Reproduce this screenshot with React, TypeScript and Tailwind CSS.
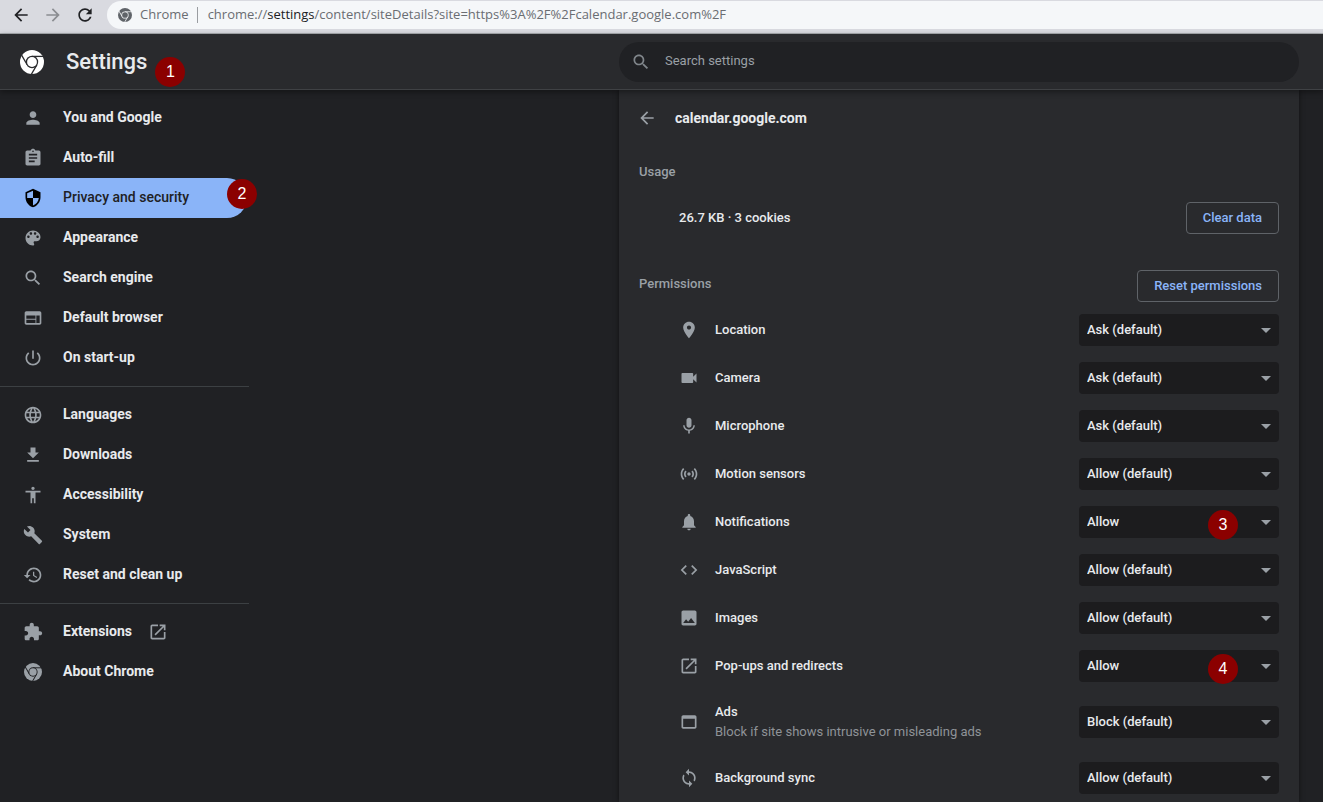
import { useId, type ReactNode } from "react";

const PATHS = {
  person: "M12 12c2.21 0 4-1.79 4-4s-1.79-4-4-4-4 1.79-4 4 1.79 4 4 4zm0 2c-2.67 0-8 1.34-8 4v2h16v-2c0-2.66-5.33-4-8-4z",
  assignment:
    "M19 3h-4.18C14.4 1.84 13.3 1 12 1c-1.3 0-2.4.84-2.82 2H5c-1.1 0-2 .9-2 2v14c0 1.1.9 2 2 2h14c1.1 0 2-.9 2-2V5c0-1.1-.9-2-2-2zm-7 0c.55 0 1 .45 1 1s-.45 1-1 1-1-.45-1-1 .45-1 1-1zm2 14H7v-2h7v2zm3-4H7v-2h10v2zm0-4H7V7h10v2z",
  shield:
    "M12 1L3 5v6c0 5.55 3.84 10.74 9 12 5.16-1.26 9-6.45 9-12V5l-9-4zm0 10.99h7c-.53 4.12-3.28 7.79-7 8.94V12H5V6.3l7-3.11v8.8z",
  palette:
    "M12 3c-4.97 0-9 4.03-9 9s4.03 9 9 9c.83 0 1.5-.67 1.5-1.5 0-.39-.15-.74-.39-1.01-.23-.26-.38-.61-.38-.99 0-.83.67-1.5 1.5-1.5H16c2.76 0 5-2.24 5-5 0-4.42-4.03-8-9-8zm-5.5 9c-.83 0-1.5-.67-1.5-1.5S5.67 9 6.5 9 8 9.67 8 10.5 7.33 12 6.5 12zm3-4C8.67 8 8 7.33 8 6.5S8.67 5 9.5 5s1.5.67 1.5 1.5S10.33 8 9.5 8zm5 0c-.83 0-1.5-.67-1.5-1.5S13.67 5 14.5 5s1.5.67 1.5 1.5S15.33 8 14.5 8zm3 4c-.83 0-1.5-.67-1.5-1.5S16.67 9 17.5 9s1.5.67 1.5 1.5-.67 1.5-1.5 1.5z",
  search:
    "M15.5 14h-.79l-.28-.27C15.41 12.59 16 11.11 16 9.5 16 5.91 13.09 3 9.5 3S3 5.91 3 9.5 5.91 16 9.5 16c1.61 0 3.09-.59 4.23-1.57l.27.28v.79l5 4.99L20.49 19l-4.99-5zm-6 0C7.01 14 5 11.99 5 9.5S7.01 5 9.5 5 14 7.01 14 9.5 11.99 14 9.5 14z",
  web: "M20 4H4c-1.1 0-1.99.9-1.99 2L2 18c0 1.1.9 2 2 2h16c1.1 0 2-.9 2-2V6c0-1.1-.9-2-2-2zm-5 14H4v-4h11v4zm0-5H4V9h11v4zm5 5h-4V9h4v9z",
  power:
    "M13 3h-2v10h2V3zm4.83 2.17l-1.42 1.42C17.99 7.86 19 9.81 19 12c0 3.87-3.13 7-7 7s-7-3.13-7-7c0-2.19 1.01-4.14 2.58-5.42L6.17 5.17C4.23 6.82 3 9.26 3 12c0 4.97 4.03 9 9 9s9-4.03 9-9c0-2.74-1.23-5.18-3.17-6.83z",
  globe:
    "M11.99 2C6.47 2 2 6.48 2 12s4.47 10 9.99 10C17.52 22 22 17.52 22 12S17.52 2 11.99 2zm6.93 6h-2.95c-.32-1.25-.78-2.45-1.38-3.56 1.84.63 3.37 1.91 4.33 3.56zM12 4.04c.83 1.2 1.48 2.53 1.91 3.96h-3.82c.43-1.43 1.08-2.76 1.91-3.96zM4.26 14C4.1 13.36 4 12.69 4 12s.1-1.36.26-2h3.38c-.08.66-.14 1.32-.14 2 0 .68.06 1.34.14 2H4.26zm.82 2h2.95c.32 1.25.78 2.45 1.38 3.56-1.84-.63-3.37-1.9-4.33-3.56zm2.95-8H5.08c.96-1.66 2.49-2.93 4.33-3.56C8.81 5.55 8.35 6.75 8.03 8zM12 19.96c-.83-1.2-1.48-2.53-1.91-3.96h3.82c-.43 1.43-1.08 2.76-1.91 3.96zM14.34 14H9.66c-.09-.66-.16-1.32-.16-2 0-.68.07-1.35.16-2h4.68c.09.65.16 1.32.16 2 0 .68-.07 1.34-.16 2zm.25 5.56c.6-1.11 1.06-2.31 1.38-3.56h2.95c-.96 1.65-2.49 2.93-4.33 3.56zM16.36 14c.08-.66.14-1.32.14-2 0-.68-.06-1.34-.14-2h3.38c.16.64.26 1.31.26 2s-.1 1.36-.26 2h-3.38z",
  download: "M19 9h-4V3H9v6H5l7 7 7-7zM5 18v2h14v-2H5z",
  accessibility: "M12 2c1.1 0 2 .9 2 2s-.9 2-2 2-2-.9-2-2 .9-2 2-2zm9 7h-6v13h-2v-6h-2v6H9V9H3V7h18v2z",
  wrench:
    "M22.7 19l-9.1-9.1c.9-2.3.4-5-1.5-6.9-2-2-5-2.4-7.4-1.3L9 6 6 9 1.6 4.7C.4 7.1.9 10.1 2.9 12.1c1.9 1.9 4.6 2.4 6.9 1.5l9.1 9.1c.4.4 1 .4 1.4 0l2.3-2.3c.5-.4.5-1.1.1-1.4z",
  restore:
    "M13 3c-4.97 0-9 4.03-9 9H1l3.89 3.89.07.14L9 12H6c0-3.87 3.13-7 7-7s7 3.13 7 7-3.13 7-7 7c-1.93 0-3.68-.79-4.94-2.06l-1.42 1.42C8.27 19.99 10.51 21 13 21c4.97 0 9-4.03 9-9s-4.03-9-9-9zm-1 5v5l4.28 2.54.72-1.21-3.5-2.08V8H12z",
  extension:
    "M20.5 11H19V7c0-1.1-.9-2-2-2h-4V3.5C13 2.12 11.88 1 10.5 1S8 2.12 8 3.5V5H4c-1.1 0-1.99.9-1.99 2v3.8H3.5c1.49 0 2.7 1.21 2.7 2.7s-1.21 2.7-2.7 2.7H2V20c0 1.1.9 2 2 2h3.8v-1.5c0-1.49 1.21-2.7 2.7-2.7 1.49 0 2.7 1.21 2.7 2.7V22H17c1.1 0 2-.9 2-2v-4h1.5c1.38 0 2.5-1.12 2.5-2.5S21.88 11 20.5 11z",
  launch:
    "M19 19H5V5h7V3H5c-1.11 0-2 .9-2 2v14c0 1.1.89 2 2 2h14c1.1 0 2-.9 2-2v-7h-2v7zM14 3v2h3.59l-9.83 9.83 1.41 1.41L19 6.41V10h2V3h-7z",
  location:
    "M12 2C8.13 2 5 5.13 5 9c0 5.25 7 13 7 13s7-7.75 7-13c0-3.87-3.13-7-7-7zm0 9.5c-1.38 0-2.5-1.12-2.5-2.5s1.12-2.5 2.5-2.5 2.5 1.12 2.5 2.5-1.12 2.5-2.5 2.5z",
  camera:
    "M17 10.500V7c0-.55-.45-1-1-1H4c-.55 0-1 .45-1 1v10c0 .55.45 1 1 1h12c.55 0 1-.45 1-1v-3.500l4 4v-11l-4 4z",
  mic: "M12 14c1.66 0 2.99-1.34 2.99-3L15 5c0-1.66-1.34-3-3-3S9 3.340 9 5v6c0 1.660 1.340 3 3 3zm5.300-3c0 3-2.540 5.100-5.300 5.100S6.700 14 6.700 11H5c0 3.410 2.720 6.230 6 6.720V21h2v-3.280c3.280-.480 6-3.300 6-6.720h-1.700z",
  sensors:
    "M7.760 16.240C6.670 15.160 6 13.660 6 12s.670-3.160 1.760-4.240l1.420 1.420C8.450 9.900 8 10.900 8 12c0 1.100.450 2.100 1.170 2.830l-1.410 1.410zm8.480 0C17.330 15.160 18 13.660 18 12s-.670-3.160-1.760-4.240l-1.420 1.420C15.550 9.900 16 10.900 16 12c0 1.100-.450 2.100-1.170 2.830l1.410 1.410zM12 10c-1.100 0-2 .900-2 2s.900 2 2 2 2-.900 2-2-.900-2-2-2zm8 2c0 2.210-.900 4.210-2.350 5.650l1.420 1.420C20.880 17.260 22 14.760 22 12s-1.120-5.260-2.930-7.070l-1.420 1.420C19.100 7.790 20 9.790 20 12zM6.350 6.350L4.930 4.930C3.120 6.740 2 9.240 2 12s1.120 5.260 2.930 7.070l1.420-1.420C4.900 16.210 4 14.210 4 12s.900-4.210 2.350-5.650z",
  bell: "M12 22c1.100 0 2-.900 2-2h-4c0 1.100.890 2 2 2zm6-6v-5c0-3.070-1.640-5.640-4.500-6.320V4c0-.830-.670-1.500-1.500-1.500s-1.500.670-1.500 1.500v.680C7.630 5.360 6 7.920 6 11v5l-2 2v1h16v-1l-2-2z",
  code: "M9.400 16.600L4.800 12l4.600-4.600L8 6l-6 6 6 6 1.400-1.400zm5.200 0l4.600-4.600-4.600-4.600L16 6l6 6-6 6-1.400-1.400z",
  image:
    "M21 19V5c0-1.100-.900-2-2-2H5c-1.100 0-2 .900-2 2v14c0 1.100.900 2 2 2h14c1.100 0 2-.900 2-2zM8.500 13.500l2.500 3.010L14.500 12l4.500 6H5l3.500-4.500z",
  ads: "M19 4H5c-1.110 0-2 .900-2 2v12c0 1.100.890 2 2 2h14c1.100 0 2-.900 2-2V6c0-1.100-.900-2-2-2zm0 14H5V8h14v10z",
  sync: "M12 4V1L8 5l4 4V6c3.310 0 6 2.690 6 6 0 1.010-.250 1.970-.700 2.800l1.460 1.460C19.540 15.030 20 13.570 20 12c0-4.420-3.580-8-8-8zm0 14c-3.310 0-6-2.690-6-6 0-1.010.250-1.970.700-2.800L5.240 7.740C4.460 8.970 4 10.430 4 12c0 4.420 3.580 8 8 8v3l4-4-4-4v3z",
  back: "M20 11H7.830l5.590-5.590L12 4l-8 8 8 8 1.410-1.410L7.830 13H20v-2z",
  forward: "M12 4l-1.410 1.410L16.170 11H4v2h12.170l-5.580 5.590L12 20l8-8z",
  refresh:
    "M17.650 6.350C16.200 4.900 14.210 4 12 4c-4.420 0-7.990 3.580-7.990 8s3.570 8 7.990 8c3.730 0 6.840-2.550 7.730-6h-2.080c-.820 2.330-3.040 4-5.650 4-3.310 0-6-2.690-6-6s2.690-6 6-6c1.660 0 3.140.690 4.220 1.780L13 11h7V4l-2.350 2.350z",
};

type IconName = keyof typeof PATHS;

function Icon({ name, className = "size-5" }: { name: IconName; className?: string }) {
  return (
    <svg viewBox="0 0 24 24" fill="currentColor" aria-hidden="true" className={`shrink-0 ${className}`}>
      <path d={PATHS[name]} />
    </svg>
  );
}

function ChromeLogo({ className }: { className: string }) {
  const id = useId();
  return (
    <svg viewBox="0 0 24 24" fill="currentColor" aria-hidden="true" className={`shrink-0 ${className}`}>
      <mask id={id} maskUnits="userSpaceOnUse" x="0" y="0" width="24" height="24">
        <rect width="24" height="24" fill="white" />
        <circle cx="12" cy="12" r="6.2" fill="black" />
        <g stroke="black" strokeWidth="1.3" fill="none">
          <path d="M12 6.400H24" />
          <path d="M12 6.400H24" transform="rotate(120 12 12)" />
          <path d="M12 6.400H24" transform="rotate(240 12 12)" />
        </g>
      </mask>
      <circle cx="12" cy="12" r="12" mask={`url(#${id})`} />
      <circle cx="12" cy="12" r="4.900" />
    </svg>
  );
}

function Badge({ children, className }: { children: ReactNode; className: string }) {
  return (
    <span
      className={`absolute z-10 flex size-[30px] items-center justify-center rounded-full bg-[#8b0000] font-['Liberation_Sans',sans-serif] text-base font-normal text-white ${className}`}
    >
      {children}
    </span>
  );
}

type NavEntry = { icon: IconName | "chrome"; label: string; active?: boolean; external?: boolean };

const NAV: NavEntry[][] = [
  [
    { icon: "person", label: "You and Google" },
    { icon: "assignment", label: "Auto-fill" },
    { icon: "shield", label: "Privacy and security", active: true },
    { icon: "palette", label: "Appearance" },
    { icon: "search", label: "Search engine" },
    { icon: "web", label: "Default browser" },
    { icon: "power", label: "On start-up" },
  ],
  [
    { icon: "globe", label: "Languages" },
    { icon: "download", label: "Downloads" },
    { icon: "accessibility", label: "Accessibility" },
    { icon: "wrench", label: "System" },
    { icon: "restore", label: "Reset and clean up" },
  ],
  [
    { icon: "extension", label: "Extensions", external: true },
    { icon: "chrome", label: "About Chrome" },
  ],
];

function NavItem({ icon, label, active, external }: NavEntry) {
  return (
    <li>
      <a
        href="#"
        aria-current={active ? "page" : undefined}
        className={`relative mr-0.5 flex h-10 items-center gap-5 rounded-r-full pl-[23px] text-sm ${
          active ? "bg-[#8ab4f8] font-medium text-[#202124]" : "font-bold text-[#e8eaed]"
        }`}
      >
        <span className={`flex size-5 items-center justify-center ${active ? "text-black" : "text-[#9aa0a6]"}`}>
          {icon === "chrome" ? <ChromeLogo className="size-[18px]" /> : <Icon name={icon} />}
        </span>
        <span className="pb-0.5">{label}</span>
        {external && <Icon name="launch" className="-ml-1 size-5 text-[#9aa0a6]" />}
        {active && <Badge className="-right-2.5 top-px">2</Badge>}
      </a>
    </li>
  );
}

type Permission = { icon: IconName; label: string; value: string; note?: string; badge?: string };

const PERMISSIONS: Permission[] = [
  { icon: "location", label: "Location", value: "Ask (default)" },
  { icon: "camera", label: "Camera", value: "Ask (default)" },
  { icon: "mic", label: "Microphone", value: "Ask (default)" },
  { icon: "sensors", label: "Motion sensors", value: "Allow (default)" },
  { icon: "bell", label: "Notifications", value: "Allow", badge: "3" },
  { icon: "code", label: "JavaScript", value: "Allow (default)" },
  { icon: "image", label: "Images", value: "Allow (default)" },
  { icon: "launch", label: "Pop-ups and redirects", value: "Allow", badge: "4" },
  { icon: "ads", label: "Ads", value: "Block (default)", note: "Block if site shows intrusive or misleading ads" },
  { icon: "sync", label: "Background sync", value: "Allow (default)" },
];

function PermissionRow({ icon, label, value, note, badge }: Permission) {
  const id = useId();
  return (
    <li className={`flex items-center gap-4 pl-10 ${note ? "h-16" : "h-12"}`}>
      <Icon name={icon} className="size-5 text-[#9aa0a6]" />
      <div className="flex-1 leading-5">
        <label htmlFor={id} className="block">
          {label}
        </label>
        {note && <p className="font-normal text-[#8f9398]">{note}</p>}
      </div>
      <div className="relative w-[200px]">
        <select
          id={id}
          defaultValue={value}
          className="block h-8 w-full appearance-none rounded bg-[#1c1c1e] px-2 font-medium text-[#e8eaed]"
        >
          <option>{value}</option>
        </select>
        <svg
          viewBox="0 0 10 5"
          aria-hidden="true"
          className="pointer-events-none absolute right-2 top-3.5 h-[5px] w-2.5 text-[#9aa0a6]"
        >
          <path d="M0 0h10L5 5z" fill="currentColor" />
        </svg>
        {badge && <Badge className="left-[129px] top-1">{badge}</Badge>}
      </div>
    </li>
  );
}

const OUTLINE_BUTTON = "h-8 rounded border border-[#5f6368] px-4 font-medium text-[#8ab4f8]";

export default function App() {
  return (
    <div className="flex min-h-screen flex-col bg-[#202124] font-['Roboto',sans-serif] text-[13px] font-medium text-[#e8eaed]">
      <div className="flex items-start border-b border-[#a9adb0] bg-[#d9dae0] pb-1 pt-px">
        <div className="flex h-7 items-center gap-3 pl-[11px] pr-3">
          <button aria-label="Back" className="text-[#202124]">
            <Icon name="back" className="size-5" />
          </button>
          <button aria-label="Forward" className="text-[#8b8d91]">
            <Icon name="forward" className="size-5" />
          </button>
          <button aria-label="Reload" className="text-[#202124]">
            <Icon name="refresh" className="size-5" />
          </button>
        </div>
        <div className="flex h-7 flex-1 items-center rounded-l-full bg-[#f5f7f9] pl-[11px] font-['Open_Sans','Noto_Sans',sans-serif] text-[13px] font-normal text-[#6a6d72]">
          <ChromeLogo className="size-3.5 text-[#5f6368]" />
          <span className="ml-2">Chrome</span>
          <span className="ml-2 mr-2.5 h-4 w-px bg-[#9a9da1]" />
          <span className="whitespace-nowrap">
            chrome://<span className="text-[#202124]">settings</span>
            /content/siteDetails?site=https%3A%2F%2Fcalendar.google.com%2F
          </span>
        </div>
      </div>

      <header className="relative z-10 flex h-14 items-center justify-between border-b border-[#3f4144] bg-[#292a2d] pl-5 pr-6 shadow-[0_2px_6px_rgba(0,0,0,0.4)]">
        <div className="relative flex items-center gap-[22px]">
          <ChromeLogo className="size-6 text-white" />
          <h1 className="text-[22px] font-medium leading-7">Settings</h1>
          <Badge className="-right-[38px] top-[9px]">1</Badge>
        </div>
        <label className="flex h-10 w-[680px] items-center gap-3.5 rounded-full bg-[#202124] pl-3 text-[#9aa0a6]">
          <Icon name="search" className="size-5 text-[#80868b]" />
          <input
            type="search"
            aria-label="Search settings"
            placeholder="Search settings"
            className="flex-1 bg-transparent pb-0.5 font-normal outline-none placeholder:text-[#9aa0a6]"
          />
        </label>
      </header>

      <div className="flex flex-1 items-stretch justify-between">
        <nav aria-label="Settings" className="w-[249px] py-2">
          {NAV.map((group, index) => (
            <ul key={index} className={index > 0 ? "mt-2 border-t border-[#3c4043] pt-2" : ""}>
              {group.map((entry) => (
                <NavItem key={entry.label} {...entry} />
              ))}
            </ul>
          ))}
        </nav>

        <main className="mr-6 w-[680px] bg-[#292a2d] px-5 shadow-[0_0_5px_rgba(0,0,0,0.5)]">
          <div className="flex h-14 items-center gap-[18px]">
            <button aria-label="Back to all sites" className="-ml-0.5 text-[#9aa0a6]">
              <Icon name="back" className="size-5" />
            </button>
            <h2 className="text-sm font-bold">calendar.google.com</h2>
          </div>

          <h3 className="leading-[52px] text-[#9aa0a6]">Usage</h3>
          <div className="flex h-10 items-center justify-between pl-10">
            <span>26.7 KB · 3 cookies</span>
            <button className={OUTLINE_BUTTON}>Clear data</button>
          </div>

          <div className="flex items-start justify-between pb-1 pt-8">
            <h3 className="leading-7 text-[#9aa0a6]">Permissions</h3>
            <button className={OUTLINE_BUTTON}>Reset permissions</button>
          </div>
          <ul>
            {PERMISSIONS.map((permission) => (
              <PermissionRow key={permission.label} {...permission} />
            ))}
          </ul>
        </main>
      </div>
    </div>
  );
}
